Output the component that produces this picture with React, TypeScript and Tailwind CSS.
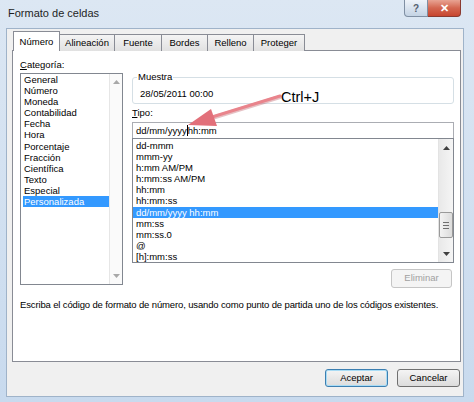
import React from "react"

const categories = [
  "General",
  "Número",
  "Moneda",
  "Contabilidad",
  "Fecha",
  "Hora",
  "Porcentaje",
  "Fracción",
  "Científica",
  "Texto",
  "Especial",
  "Personalizada",
]

const formats = [
  "dd-mmm",
  "mmm-yy",
  "h:mm AM/PM",
  "h:mm:ss AM/PM",
  "hh:mm",
  "hh:mm:ss",
  "dd/mm/yyyy hh:mm",
  "mm:ss",
  "mm:ss.0",
  "@",
  "[h]:mm:ss",
]

const tabs = [
  { label: "Número", w: "w-[47px]" },
  { label: "Alineación", w: "w-[55px]" },
  { label: "Fuente", w: "w-[47px]" },
  { label: "Bordes", w: "w-[46px]" },
  { label: "Relleno", w: "w-[46px]" },
  { label: "Proteger", w: "w-[51px]" },
]

function Tri({ up, color }: { up?: boolean; color: string }) {
  return (
    <svg width="7" height="4" viewBox="0 0 7 4">
      <path d={up ? "M0 4 L3.5 0 L7 4Z" : "M0 0 L3.5 4 L7 0Z"} fill={color} />
    </svg>
  )
}

export default function App() {
  return (
    <div className="relative w-[474px] h-[402px] overflow-hidden flex flex-col bg-gradient-to-b from-[#dce7f3] to-[#c8daee] font-['Liberation_Sans',Arial,sans-serif] text-[9.5px] text-black">
      {/* Title bar */}
      <div className="h-[28px] flex items-start shrink-0">
        <div className="pl-[8px] pt-[6px] text-[11px] leading-[14px] text-[#1e1e1e]">Formato de celdas</div>
        <div className="ml-auto mr-[13px] flex">
          <div className="w-[24px] h-[17px] flex items-center justify-center rounded-bl-[4px] border border-t-0 border-[#7f8fa3] bg-gradient-to-b from-[#eef3f9] to-[#c4d3e4] text-[10px] text-[#55606e] font-bold">
            ?
          </div>
          <div className="w-[33px] h-[17px] flex items-center justify-center rounded-br-[4px] border border-l-0 border-t-0 border-[#8a3a30] bg-gradient-to-b from-[#e8a393] via-[#d36650] to-[#c7452f] text-[11px] text-white font-bold">
            ✕
          </div>
        </div>
      </div>

      {/* Client area */}
      <div className="ml-[6px] mr-[10px] h-[369px] border border-[#9fb3c9] bg-[#f0f0f0] pl-[5px] pr-[2px] flex flex-col">
        {/* Tabs */}
        <div className="flex items-end h-[22px] pl-[1px] -mb-px relative z-10">
          {tabs.map((t, i) =>
            i === 0 ? (
              <div
                key={t.label}
                className={`${t.w} h-[20px] border border-b-0 border-[#898c95] bg-white flex items-center justify-center leading-[12px]`}
              >
                {t.label}
              </div>
            ) : (
              <div
                key={t.label}
                className={`${t.w} h-[17px] border border-l-0 border-b-0 border-[#898c95] bg-gradient-to-b from-[#f4f4f4] to-[#e1e1e1] flex items-center justify-center leading-[12px]`}
              >
                {t.label}
              </div>
            ),
          )}
        </div>

        {/* Tab panel */}
        <div className="h-[312px] border border-[#898c95] bg-white pt-[6px] pl-[7px] pr-[6px] flex flex-col">
          <div className="flex">
            {/* Categories */}
            <div className="w-[103px] flex flex-col">
              <div className="h-[15px] leading-[15px]">
                <span className="underline">C</span>ategoría:
              </div>
              <div className="mt-[1px] h-[212px] border border-[#828790] flex">
                <div className="flex-1 flex flex-col pl-[2px]">
                  {categories.map((c, i) => (
                    <div
                      key={c}
                      className={`h-[11.1px] leading-[11px] pl-[1px] ${
                        i === categories.length - 1 ? "bg-[#3399ff] text-white" : ""
                      }`}
                    >
                      {c}
                    </div>
                  ))}
                </div>
                <div className="w-[13px] border-l border-[#e6e6e6] bg-[#fafafa] flex flex-col items-center justify-between py-[6px]">
                  <Tri up color="#a8a8a8" />
                  <Tri color="#a8a8a8" />
                </div>
              </div>
            </div>

            {/* Right side */}
            <div className="ml-[9px] w-[322px] flex flex-col pt-[14px]">
              <fieldset className="border border-[#d5dfe5] rounded-[3px] h-[33px]">
                <legend className="ml-[4px] px-[1px] leading-[12px]">Muestra</legend>
                <div className="pl-[7px] pt-[5px] leading-[12px]">28/05/2011 00:00</div>
              </fieldset>
              <div className="mt-[3px] h-[12px] leading-[12px]">
                <span className="underline">T</span>ipo:
              </div>
              <div className="mt-[3px] h-[17px] border border-[#abadb3] flex items-center pl-[3px] leading-[12px]">
                dd/mm/yyyy<span className="inline-block w-px h-[11px] bg-black" />hh:mm
              </div>
              <div className="-mt-px h-[125px] border border-[#828790] flex">
                <div className="flex-1 flex flex-col pt-[1px]">
                  {formats.map((f, i) => (
                    <div
                      key={f}
                      className={`h-[11.1px] leading-[11px] pl-[3px] ${
                        i === 6 ? "bg-[#3399ff] text-white" : ""
                      }`}
                    >
                      {f}
                    </div>
                  ))}
                </div>
                <div className="w-[15px] border-l border-[#e3e3e3] bg-gradient-to-r from-[#e9e9e9] to-[#f5f5f5] flex flex-col items-center">
                  <div className="h-[17px] flex items-center">
                    <Tri up color="#404040" />
                  </div>
                  <div className="flex-1">
                    <div className="mt-[56px] w-[14px] h-[26px] rounded-[2px] border border-[#9a9a9a] bg-gradient-to-r from-[#f3f3f3] to-[#dcdcdc] flex flex-col items-center justify-center gap-[2px]">
                      <div className="w-[6px] h-px bg-[#6f6f6f]" />
                      <div className="w-[6px] h-px bg-[#6f6f6f]" />
                      <div className="w-[6px] h-px bg-[#6f6f6f]" />
                    </div>
                  </div>
                  <div className="h-[17px] flex items-center">
                    <Tri color="#404040" />
                  </div>
                </div>
              </div>
              <div className="mt-[6px] self-end mr-[2px] w-[61px] h-[19px] rounded-[3px] border border-[#c5c5c5] bg-[#f4f4f4] flex items-center justify-center text-[#a0a0a0]">
                Eliminar
              </div>
            </div>
          </div>

          <div className="mt-[11px] leading-[12px] tracking-[-0.14px]">
            Escriba el código de formato de número, usando como punto de partida uno de los códigos existentes.
          </div>
        </div>

        {/* Buttons */}
        <div className="mt-[7px] flex justify-end gap-[9px] pr-[1px]">
          <div className="w-[63px] h-[18px] rounded-[3px] border border-[#3c7fb1] shadow-[inset_0_0_0_1px_#a9dcf5] bg-gradient-to-b from-[#f4f4f4] to-[#dcdcdc] flex items-center justify-center">
            Aceptar
          </div>
          <div className="w-[63px] h-[18px] rounded-[3px] border border-[#707070] bg-gradient-to-b from-[#f4f4f4] to-[#dcdcdc] flex items-center justify-center">
            Cancelar
          </div>
        </div>
      </div>

      {/* Annotation overlay */}
      <svg className="absolute left-0 top-0 pointer-events-none" width="474" height="402">
        <line x1="280" y1="97" x2="212" y2="118" stroke="#b8505a" strokeWidth="4" strokeLinecap="round" opacity="0.35" />
        <line x1="280" y1="96" x2="212" y2="117" stroke="#e9848c" strokeWidth="3" strokeLinecap="round" />
        <polygon points="188,125 217,126 211,109" fill="#e2707a" />
      </svg>
      <div className="absolute left-[281px] top-[89px] text-[14.5px] leading-[16px] font-['Liberation_Sans',Arial,sans-serif] text-black">
        Ctrl+J
      </div>
    </div>
  )
}
